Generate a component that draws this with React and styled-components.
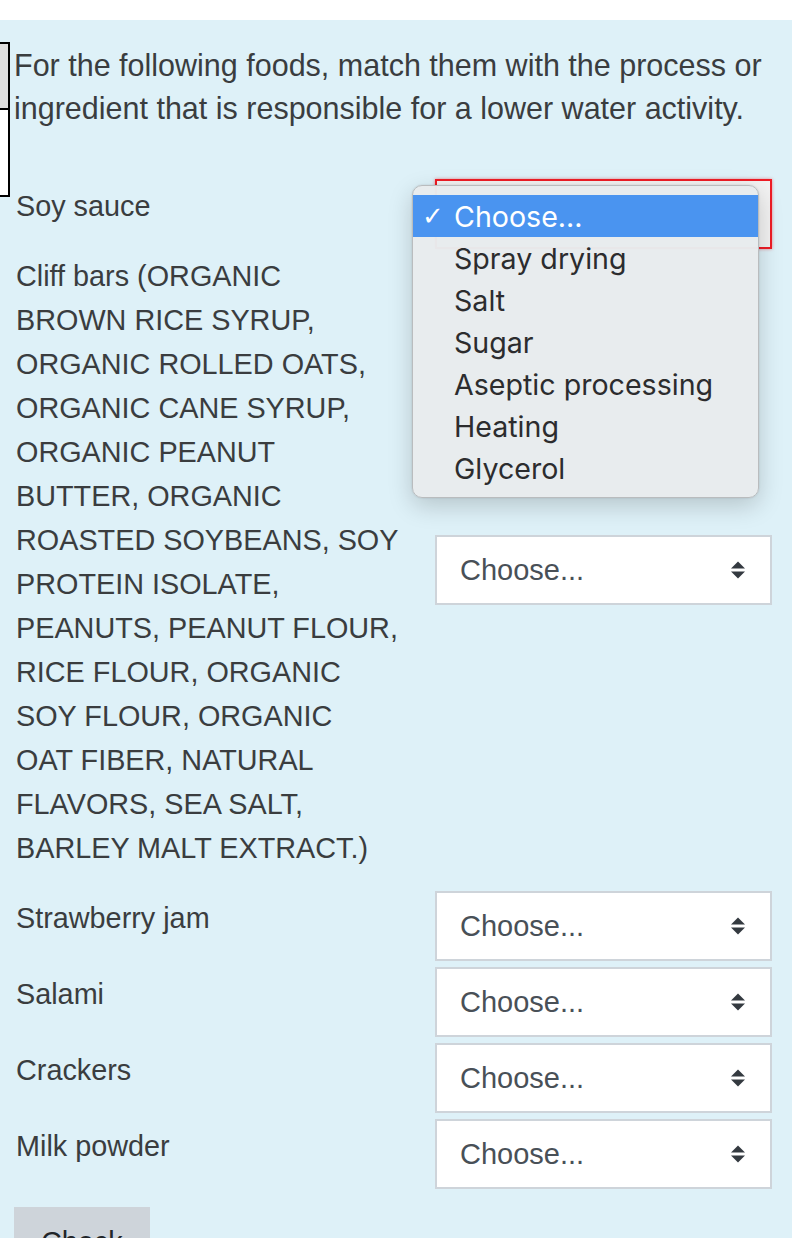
import React from "react"
import styled, { createGlobalStyle } from "styled-components"

const GlobalStyle = createGlobalStyle`
  html, body {
    margin: 0;
    padding: 0;
    background: #fff;
  }
  body {
    font-family: "Liberation Sans", Arial, sans-serif;
    color: #333;
  }
`

const options = [
  "Spray drying",
  "Salt",
  "Sugar",
  "Aseptic processing",
  "Heating",
  "Glycerol",
]

// the long stem is kept in the same lines as the narrow table cell shows it
const stems = [
  { lines: ["Soy sauce"], open: true },
  {
    lines: [
      "Cliff bars (ORGANIC",
      "BROWN RICE SYRUP,",
      "ORGANIC ROLLED OATS,",
      "ORGANIC CANE SYRUP,",
      "ORGANIC PEANUT",
      "BUTTER, ORGANIC",
      "ROASTED SOYBEANS, SOY",
      "PROTEIN ISOLATE,",
      "PEANUTS, PEANUT FLOUR,",
      "RICE FLOUR, ORGANIC",
      "SOY FLOUR, ORGANIC",
      "OAT FIBER, NATURAL",
      "FLAVORS, SEA SALT,",
      "BARLEY MALT EXTRACT.)",
    ],
  },
  { lines: ["Strawberry jam"] },
  { lines: ["Salami"] },
  { lines: ["Crackers"] },
  { lines: ["Milk powder"] },
]

const Arrows = () => (
  <svg width="16" height="18" viewBox="0 0 16 18">
    <polygon points="1,7.5 8,0.5 15,7.5" fill="#343a40" />
    <polygon points="1,10.5 8,17.5 15,10.5" fill="#343a40" />
  </svg>
)

const Popup = () => (
  <Menu>
    <MenuItem $active>
      <Tick>✓</Tick>Choose...
    </MenuItem>
    {options.map((o) => (
      <MenuItem key={o}>
        <Tick />
        {o}
      </MenuItem>
    ))}
  </Menu>
)

const App = () => {
  return (
    <>
      <GlobalStyle />
      <TopBand />
      <Formulation>
        <InfoTab>
          <InfoHead />
          <InfoBody />
        </InfoTab>
        <Main>
          <QuestionText>
            For the following foods, match them with the process or
            ingredient that is responsible for a lower water activity.
          </QuestionText>
          <Answers>
            {stems.map((s) => (
              <Row key={s.lines[0]}>
                <Stem>
                  {s.lines.map((l) => (
                    <Line key={l}>{l}</Line>
                  ))}
                </Stem>
                <Control>
                  <Select $error={s.open}>
                    {!s.open && (
                      <>
                        <span>Choose...</span>
                        <Arrows />
                      </>
                    )}
                  </Select>
                  {s.open && <Popup />}
                </Control>
              </Row>
            ))}
          </Answers>
          <CheckButton>Check</CheckButton>
        </Main>
      </Formulation>
    </>
  )
}

export default App

const TopBand = styled.div`
  height: 20px;
  background: #fff;
`

const Formulation = styled.div`
  display: flex;
  background: #def1f8;
  min-height: 1218px;
`

const InfoTab = styled.div`
  flex: 0 0 10px;
  align-self: flex-start;
  margin-top: 22px;
  border: 2px solid #000;
  border-left: none;
  box-sizing: border-box;
`

const InfoHead = styled.div`
  height: 64px;
  background: #dedede;
  border-bottom: 2px solid #000;
`

const InfoBody = styled.div`
  height: 85px;
  background: #fff;
`

const Main = styled.div`
  flex: 1;
  padding: 24px 20px 0 4px;
  font-size: 28.8px;
  line-height: 43px;
  color: #3a3d3f;
`

const QuestionText = styled.div`
  font-size: 30.5px;
  margin-bottom: 46px;
`

const Answers = styled.div`
  display: flex;
  flex-direction: column;
`

const Row = styled.div`
  display: grid;
  grid-template-columns: 380px 337px;
  column-gap: 39px;
  align-items: center;
  padding-left: 2px;
`

const Stem = styled.div`
  line-height: 44px;
  padding: 2px 0 18px;
`

const Line = styled.div`
  white-space: nowrap;
`

const Control = styled.div`
  position: relative;
  padding: 3px 0;
`

const Select = styled.div`
  box-sizing: border-box;
  height: 70px;
  display: flex;
  align-items: center;
  justify-content: space-between;
  padding: 0 24px 0 23px;
  background: ${(p) => (p.$error ? "#f2f2f2" : "#fff")};
  border: 2px solid ${(p) => (p.$error ? "#ee1c25" : "#ced4da")};
  box-shadow: ${(p) => (p.$error ? "0 0 3px rgba(238, 28, 37, 0.5)" : "none")};
  color: #495057;
  font-size: 29px;
`

const Menu = styled.div`
  position: absolute;
  left: -23px;
  top: 9px;
  width: 347px;
  box-sizing: border-box;
  padding: 9px 0 8px;
  background: rgba(232, 236, 238, 0.98);
  border: 1px solid #b9bcbe;
  border-radius: 10px;
  box-shadow: 0 8px 24px rgba(0, 0, 0, 0.18), 0 0 2px rgba(0, 0, 0, 0.15);
  font-family: Inter, "Noto Sans", sans-serif;
  font-size: 28.6px;
  z-index: 2;
`

const MenuItem = styled.div`
  display: flex;
  align-items: center;
  height: 42px;
  color: ${(p) => (p.$active ? "#fff" : "#2c2c2e")};
  background: ${(p) => (p.$active ? "#4a94f0" : "transparent")};
`

const Tick = styled.span`
  display: inline-block;
  width: 32px;
  padding-left: 9px;
  font-family: "DejaVu Sans", sans-serif;
  font-size: 26px;
`

const CheckButton = styled.div`
  display: inline-block;
  margin-top: 15px;
  padding: 13px 27px;
  background: #ced4da;
  color: #212529;
  line-height: 44px;
`
